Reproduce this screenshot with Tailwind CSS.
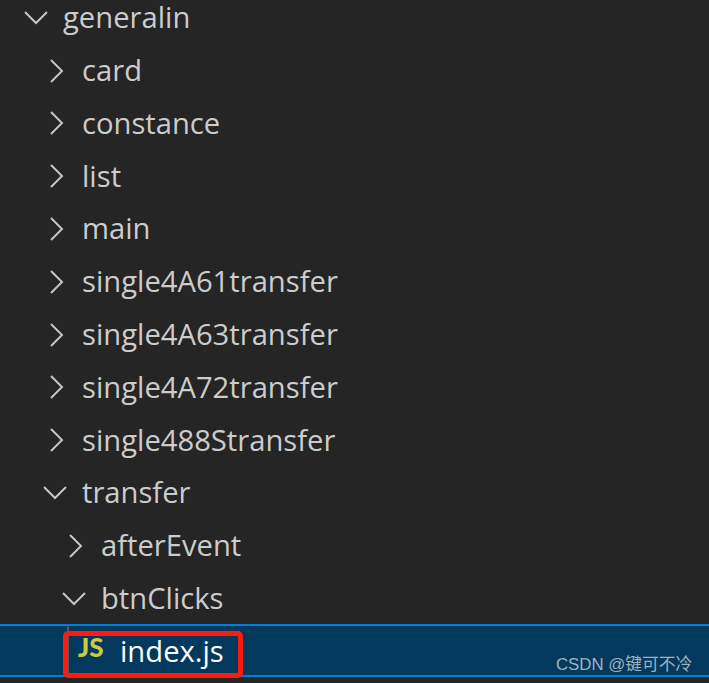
<!doctype html>
<html lang="en">
  <head>
    <meta charset="utf-8" />
    <script src="https://cdn.jsdelivr.net/npm/@tailwindcss/browser@4"></script>
    <title>Explorer</title>
  </head>
  <body class="w-[709px] h-[683px] overflow-hidden bg-[#252526] text-[#cccccc] font-['Open_Sans','Noto_Sans',sans-serif] text-[29.2px] leading-none">
    <ul>
      <li class="h-[42.8px] pb-[7px] flex items-center pl-[24px]">
        <svg class="w-[24px] h-[24px] mr-[15px]" viewBox="0 0 24 24" fill="none" stroke="#c5c5c5" stroke-width="2"><path d="M1 6l11 11L23 6" /></svg>
        generalin
      </li>
      <li class="h-[52.8px] pt-[3px] flex items-center pl-[50px]">
        <svg class="w-[14px] h-[24px] mr-[18px]" viewBox="0 0 14 24" fill="none" stroke="#c5c5c5" stroke-width="2"><path d="M1 1l11 11L1 23" /></svg>
        card
      </li>
      <li class="h-[52.8px] pt-[3px] flex items-center pl-[50px]">
        <svg class="w-[14px] h-[24px] mr-[18px]" viewBox="0 0 14 24" fill="none" stroke="#c5c5c5" stroke-width="2"><path d="M1 1l11 11L1 23" /></svg>
        constance
      </li>
      <li class="h-[52.8px] pt-[3px] flex items-center pl-[50px]">
        <svg class="w-[14px] h-[24px] mr-[18px]" viewBox="0 0 14 24" fill="none" stroke="#c5c5c5" stroke-width="2"><path d="M1 1l11 11L1 23" /></svg>
        list
      </li>
      <li class="h-[52.8px] pt-[3px] flex items-center pl-[50px]">
        <svg class="w-[14px] h-[24px] mr-[18px]" viewBox="0 0 14 24" fill="none" stroke="#c5c5c5" stroke-width="2"><path d="M1 1l11 11L1 23" /></svg>
        main
      </li>
      <li class="h-[52.8px] pt-[3px] flex items-center pl-[50px]">
        <svg class="w-[14px] h-[24px] mr-[18px]" viewBox="0 0 14 24" fill="none" stroke="#c5c5c5" stroke-width="2"><path d="M1 1l11 11L1 23" /></svg>
        single4A61transfer
      </li>
      <li class="h-[52.8px] pt-[3px] flex items-center pl-[50px]">
        <svg class="w-[14px] h-[24px] mr-[18px]" viewBox="0 0 14 24" fill="none" stroke="#c5c5c5" stroke-width="2"><path d="M1 1l11 11L1 23" /></svg>
        single4A63transfer
      </li>
      <li class="h-[52.8px] pt-[3px] flex items-center pl-[50px]">
        <svg class="w-[14px] h-[24px] mr-[18px]" viewBox="0 0 14 24" fill="none" stroke="#c5c5c5" stroke-width="2"><path d="M1 1l11 11L1 23" /></svg>
        single4A72transfer
      </li>
      <li class="h-[52.8px] pt-[3px] flex items-center pl-[50px]">
        <svg class="w-[14px] h-[24px] mr-[18px]" viewBox="0 0 14 24" fill="none" stroke="#c5c5c5" stroke-width="2"><path d="M1 1l11 11L1 23" /></svg>
        single488Stransfer
      </li>
      <li class="h-[52.8px] pt-[3px] flex items-center pl-[43px]">
        <svg class="w-[24px] h-[24px] mr-[15px]" viewBox="0 0 24 24" fill="none" stroke="#c5c5c5" stroke-width="2"><path d="M1 6l11 11L23 6" /></svg>
        transfer
      </li>
      <li class="h-[52.8px] pt-[3px] flex items-center pl-[69px]">
        <svg class="w-[14px] h-[24px] mr-[18px]" viewBox="0 0 14 24" fill="none" stroke="#c5c5c5" stroke-width="2"><path d="M1 1l11 11L1 23" /></svg>
        afterEvent
      </li>
      <li class="h-[52.8px] pt-[3px] flex items-center pl-[62px]">
        <svg class="w-[24px] h-[24px] mr-[15px]" viewBox="0 0 24 24" fill="none" stroke="#c5c5c5" stroke-width="2"><path d="M1 6l11 11L23 6" /></svg>
        btnClicks
      </li>
      <li class="relative h-[53px] pt-[3px] flex items-center pl-[78px] bg-[#04395e] border-y-2 border-[#007fd4] text-white">
        <span class="absolute left-[67px] top-0 bottom-0 w-[2px] bg-[#585858]"></span>
        <span class="w-[42px] text-[#cbcb41] font-black text-[26px] leading-none -mt-[9px] font-['Lato',sans-serif]">JS</span>
        index.js
        <span class="absolute left-[63px] top-[5px] w-[180px] h-[47px] border-[5px] border-[#ff1a0f] rounded-[5px]"></span>
        <span class="absolute left-[556px] top-[31px] text-[16.8px] text-[#9fb2c0] font-['Liberation_Sans','Noto_Sans_CJK_SC',sans-serif]">CSDN @键可不冷</span>
      </li>
    </ul>
  </body>
</html>
